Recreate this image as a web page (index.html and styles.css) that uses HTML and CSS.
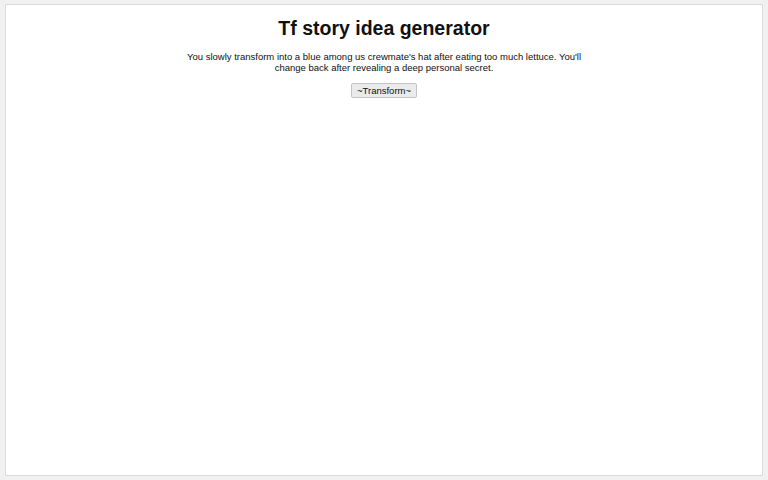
FILE: index.html
```html
<!DOCTYPE html>
<html lang="en">
<head>
    <meta charset="UTF-8">
    <meta name="viewport" content="width=device-width, initial-scale=1.0">
    <title>Tf story idea generator</title>
    <link rel="stylesheet" href="styles.css">
</head>
<body>
    <div class="container">
        <h1>Tf story idea generator</h1>
        <p id="idea" class="idea">You slowly transform into a blue among us crewmate's hat after eating too much lettuce. You'll change back after revealing a deep personal secret.</p>
        <button type="button" id="transformButton">~Transform~</button>
    </div>
</body>
</html>
```

FILE: styles.css
```css
body {
    font-family: "Liberation Sans", Arial, sans-serif;
    background-color: #f1f1f1;
    margin: 0;
    padding: 4px 5px 4px 5px;
    box-sizing: border-box;
    height: 100vh;
}
.container {
    background: white;
    border: 1px solid #dcdcdc;
    box-sizing: border-box;
    height: 100%;
    text-align: center;
    padding-top: 12px;
}
h1 {
    font-size: 19.5px;
    line-height: 22px;
    margin: 0 0 12px 0;
    color: #111;
}
.idea {
    font-size: 9.5px;
    line-height: 11px;
    max-width: 400px;
    margin: 0 auto 7px auto;
    color: #111;
}
button {
    font-family: "Liberation Sans", Arial, sans-serif;
    font-size: 9.5px;
    line-height: 11px;
    padding: 1px 5px;
    background-color: #ebebeb;
    border: 1px solid #c4c4c4;
    border-radius: 2px;
    color: #111;
    cursor: pointer;
}
button:hover {
    background-color: #dedede;
}
```
